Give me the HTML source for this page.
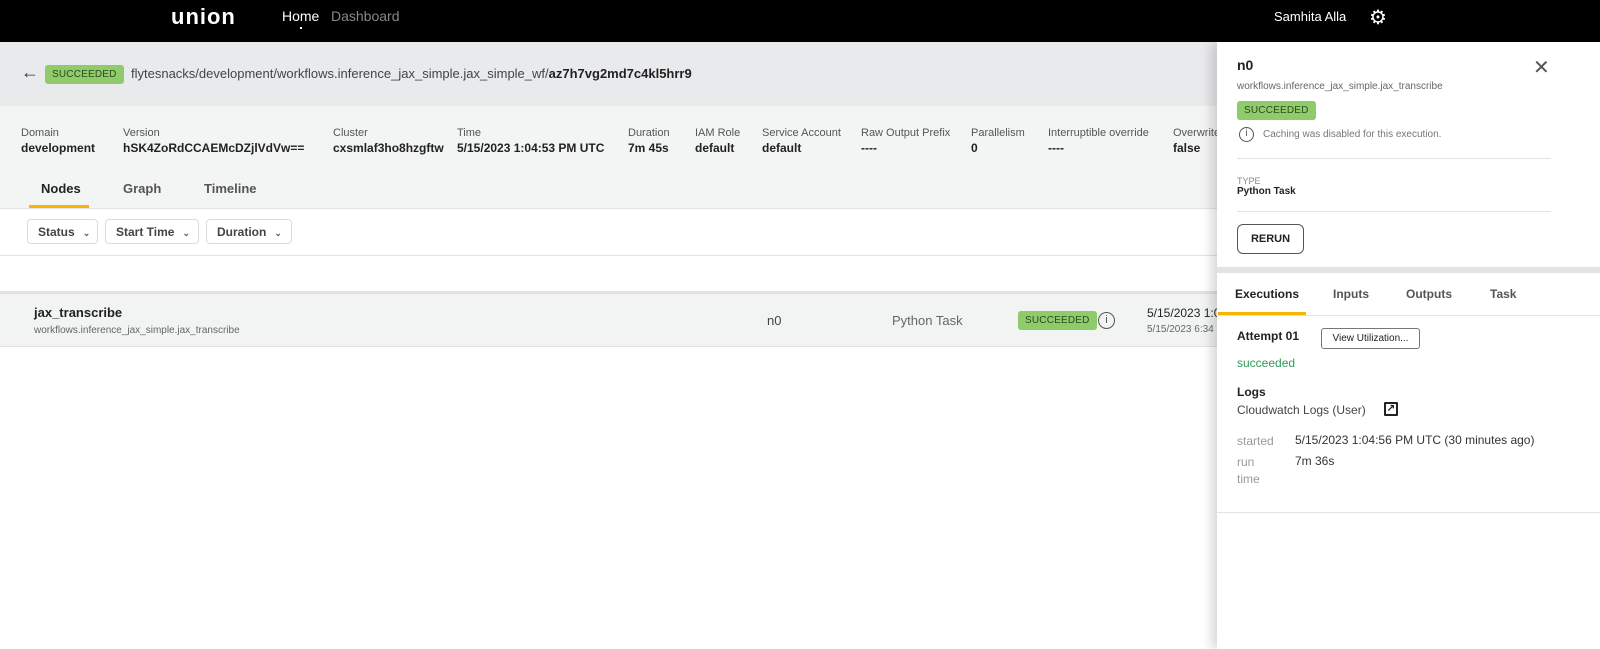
<!DOCTYPE html>
<html><head><meta charset="utf-8"><style>
*{margin:0;padding:0;box-sizing:border-box}
body{width:1600px;height:649px;overflow:hidden;font-family:"Liberation Sans",sans-serif;background:#fff;position:relative;color:#222}
.a{position:absolute;white-space:nowrap}
.badge{background:#8fcb6b;color:#2d4a1d;font-size:10px;border-radius:3px;padding:4px 7px;letter-spacing:.2px}
.lbl{font-size:11px;color:#555}
.val{font-size:12px;font-weight:bold;color:#222}
.filt{position:absolute;top:219px;height:25px;border:1px solid #dcdcdc;border-radius:4px;font-size:12px;font-weight:bold;color:#444;padding:5px 10px;white-space:nowrap}
.filt:after{content:"⌄";font-size:9px;margin-left:8px;color:#666}
</style></head><body>
<div class="a" style="left:0;top:0;width:1600px;height:42px;background:#000"></div>
<div class="a" style="left:171px;top:4px;color:#fff;font-size:22px;font-weight:bold;letter-spacing:1px">union</div>
<div class="a" style="left:282px;top:8px;color:#fff;font-size:14px">Home</div>
<div class="a" style="left:300px;top:27px;width:2px;height:2px;background:#fff"></div>
<div class="a" style="left:331px;top:8px;color:#888;font-size:14px">Dashboard</div>
<div class="a" style="left:1274px;top:9px;color:#fff;font-size:13px">Samhita Alla</div>
<div class="a" style="left:1369px;top:5px;color:#fff;font-size:20px">⚙</div>

<div class="a" style="left:0;top:42px;width:1217px;height:64px;background:#e9eaec"></div>
<div class="a" style="left:21px;top:62px;font-size:18px;color:#333">←</div>
<div class="a badge" style="left:45px;top:65px">SUCCEEDED</div>
<div class="a" style="left:131px;top:66px;font-size:13px;color:#444">flytesnacks/development/workflows.inference_jax_simple.jax_simple_wf/<b style="color:#222">az7h7vg2md7c4kl5hrr9</b></div>

<div class="a" style="left:0;top:106px;width:1217px;height:102px;background:#f3f4f4"></div>
<div class="a lbl" style="left:21px;top:127px">Domain</div><div class="a val" style="left:21px;top:141px">development</div>
<div class="a lbl" style="left:123px;top:127px">Version</div><div class="a val" style="left:123px;top:141px">hSK4ZoRdCCAEMcDZjlVdVw==</div>
<div class="a lbl" style="left:333px;top:127px">Cluster</div><div class="a val" style="left:333px;top:141px">cxsmlaf3ho8hzgftw</div>
<div class="a lbl" style="left:457px;top:127px">Time</div><div class="a val" style="left:457px;top:141px">5/15/2023 1:04:53 PM UTC</div>
<div class="a lbl" style="left:628px;top:127px">Duration</div><div class="a val" style="left:628px;top:141px">7m 45s</div>
<div class="a lbl" style="left:695px;top:127px">IAM Role</div><div class="a val" style="left:695px;top:141px">default</div>
<div class="a lbl" style="left:762px;top:127px">Service Account</div><div class="a val" style="left:762px;top:141px">default</div>
<div class="a lbl" style="left:861px;top:127px">Raw Output Prefix</div><div class="a val" style="left:861px;top:141px">----</div>
<div class="a lbl" style="left:971px;top:127px">Parallelism</div><div class="a val" style="left:971px;top:141px">0</div>
<div class="a lbl" style="left:1048px;top:127px">Interruptible override</div><div class="a val" style="left:1048px;top:141px">----</div>
<div class="a lbl" style="left:1173px;top:127px">Overwrite</div><div class="a val" style="left:1173px;top:141px">false</div>
<div class="a" style="left:41px;top:181px;font-size:13px;font-weight:bold">Nodes</div>
<div class="a" style="left:123px;top:181px;font-size:13px;font-weight:bold;color:#555">Graph</div>
<div class="a" style="left:204px;top:181px;font-size:13px;font-weight:bold;color:#555">Timeline</div>
<div class="a" style="left:29px;top:205px;width:60px;height:3px;background:#f7b500"></div>
<div class="a" style="left:0;top:208px;width:1217px;height:1px;background:#e3e3e3"></div>

<div class="filt" style="left:27px;width:71px">Status</div>
<div class="filt" style="left:105px;width:94px">Start Time</div>
<div class="filt" style="left:206px;width:86px">Duration</div>
<div class="a" style="left:0;top:255px;width:1217px;height:1px;background:#e3e3e3"></div>

<div class="a" style="left:0;top:291px;width:1217px;height:56px;background:#f2f3f3;border-top:3px solid #e2e2e2;border-bottom:1px solid #e2e2e2"></div>
<div class="a" style="left:34px;top:305px;font-size:13px;font-weight:bold">jax_transcribe</div>
<div class="a" style="left:34px;top:325px;font-size:10px;color:#666">workflows.inference_jax_simple.jax_transcribe</div>
<div class="a" style="left:767px;top:313px;font-size:13px;color:#444">n0</div>
<div class="a" style="left:892px;top:313px;font-size:13px;color:#666">Python Task</div>
<div class="a badge" style="left:1018px;top:311px">SUCCEEDED</div>
<div class="a" style="left:1098px;top:312px;width:17px;height:17px;border:1.5px solid #555;border-radius:50%;font-size:11px;text-align:center;line-height:14px;color:#555">i</div>
<div class="a" style="left:1147px;top:306px;font-size:12px">5/15/2023 1:0</div>
<div class="a" style="left:1147px;top:324px;font-size:10px;color:#666">5/15/2023 6:34</div>

<div class="a" style="left:1217px;top:42px;width:383px;height:607px;background:#fff;box-shadow:-6px 0 10px rgba(0,0,0,.15)"></div>
<div class="a" style="left:1237px;top:57px;font-size:14px;font-weight:bold">n0</div>
<div class="a" style="left:1533px;top:55px;font-size:20px;color:#555">✕</div>
<div class="a" style="left:1237px;top:81px;font-size:10px;color:#666">workflows.inference_jax_simple.jax_transcribe</div>
<div class="a badge" style="left:1237px;top:101px">SUCCEEDED</div>
<div class="a" style="left:1239px;top:127px;width:15px;height:15px;border:1.5px solid #555;border-radius:50%;font-size:10px;text-align:center;line-height:12px;color:#555">i</div>
<div class="a" style="left:1263px;top:129px;font-size:10px;color:#777">Caching was disabled for this execution.</div>
<div class="a" style="left:1237px;top:158px;width:314px;height:1px;background:#e3e3e3"></div>
<div class="a" style="left:1237px;top:176px;font-size:9px;color:#888">TYPE</div>
<div class="a" style="left:1237px;top:186px;font-size:10px;font-weight:bold">Python Task</div>
<div class="a" style="left:1237px;top:211px;width:314px;height:1px;background:#e3e3e3"></div>
<div class="a" style="left:1237px;top:224px;width:67px;height:30px;border:1px solid #555;border-radius:6px;font-size:11px;font-weight:bold;text-align:center;line-height:28px">RERUN</div>
<div class="a" style="left:1217px;top:267px;width:383px;height:6px;background:#e3e3e3"></div>
<div class="a" style="left:1235px;top:287px;font-size:12px;font-weight:bold">Executions</div>
<div class="a" style="left:1333px;top:287px;font-size:12px;font-weight:bold;color:#555">Inputs</div>
<div class="a" style="left:1406px;top:287px;font-size:12px;font-weight:bold;color:#555">Outputs</div>
<div class="a" style="left:1490px;top:287px;font-size:12px;font-weight:bold;color:#555">Task</div>
<div class="a" style="left:1218px;top:312px;width:88px;height:3px;background:#f7b500"></div>
<div class="a" style="left:1218px;top:315px;width:382px;height:1px;background:#e3e3e3"></div>
<div class="a" style="left:1237px;top:329px;font-size:12px;font-weight:bold">Attempt 01</div>
<div class="a" style="left:1321px;top:328px;width:99px;height:21px;border:1px solid #777;border-radius:3px;font-size:10px;text-align:center;line-height:19px">View Utilization...</div>
<div class="a" style="left:1237px;top:356px;font-size:12px;color:#2e9a5a">succeeded</div>
<div class="a" style="left:1237px;top:385px;font-size:12px;font-weight:bold">Logs</div>
<div class="a" style="left:1237px;top:403px;font-size:12px;color:#444">Cloudwatch Logs (User)</div>
<div class="a" style="left:1384px;top:402px;width:14px;height:14px;border:2px solid #222;border-radius:1px;font-size:10px;line-height:9px;text-align:center;font-weight:bold">↗</div>
<div class="a" style="left:1237px;top:434px;font-size:12px;color:#999">started</div>
<div class="a" style="left:1295px;top:433px;font-size:12px;color:#333">5/15/2023 1:04:56 PM UTC (30 minutes ago)</div>
<div class="a" style="left:1237px;top:454px;font-size:12px;color:#999;line-height:17px">run<br>time</div>
<div class="a" style="left:1295px;top:454px;font-size:12px;color:#333">7m 36s</div>
<div class="a" style="left:1217px;top:512px;width:383px;height:1px;background:#e3e3e3"></div>
</body></html>
